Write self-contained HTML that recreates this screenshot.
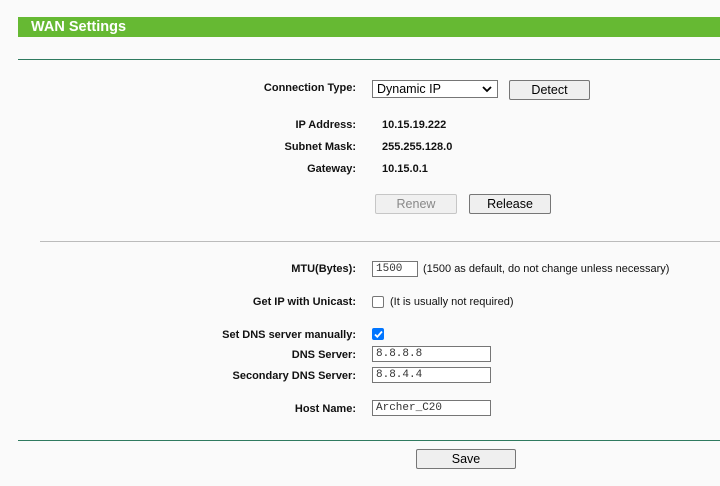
<!DOCTYPE html>
<html><head><style>
body{margin:0;width:720px;height:486px;background:#fafafa;font-family:"Liberation Sans",Arial,sans-serif;position:relative;overflow:hidden}
.a{position:absolute}
.l{position:absolute;right:364px;font-size:11px;font-weight:bold;color:#111;line-height:14px;margin-top:1px}
.v{position:absolute;left:382px;font-size:11px;font-weight:bold;color:#111;line-height:14px;margin-top:1px}
.t{position:absolute;font-size:11px;color:#111;line-height:14px;margin-top:1px}
.btn{position:absolute;height:18px;border:1px solid #767676;border-radius:2px;background:#efefef;font-size:12.5px;text-align:center;line-height:18px;color:#000;box-sizing:content-box}
.in{position:absolute;border:1px solid #767676;background:#fff;font-family:"Liberation Mono",monospace;font-size:11px;line-height:14px;padding-left:3px;color:#333;box-sizing:border-box;height:16px}
.cb{position:absolute;width:12px;height:12px;border:1px solid #767676;border-radius:2px;background:#fff;box-sizing:border-box}
</style></head><body>
<div class="a" style="left:18px;top:17px;width:702px;height:20px;background:#66b933"></div>
<div class="a" style="left:31px;top:18px;color:#fff;font-weight:bold;font-size:14.5px;line-height:18px">WAN Settings</div>
<div class="a" style="left:18px;top:59px;width:702px;height:1px;background:#2f7a5f"></div>

<div class="l" style="top:80px">Connection Type:</div>
<div class="a" style="left:372px;top:80px;width:126px;height:18px;border:1px solid #767676;background:#fff;box-sizing:border-box;font-size:12.5px;line-height:16px;padding-left:4px">Dynamic IP
<svg class="a" style="right:5px;top:5px" width="10" height="7" viewBox="0 0 10 7"><path d="M1 1l4 4 4-4" stroke="#000" stroke-width="1.8" fill="none"/></svg></div>
<div class="btn" style="left:509px;top:80px;width:79px">Detect</div>

<div class="l" style="top:117px">IP Address:</div><div class="v" style="top:117px">10.15.19.222</div>
<div class="l" style="top:139px">Subnet Mask:</div><div class="v" style="top:139px">255.255.128.0</div>
<div class="l" style="top:161px">Gateway:</div><div class="v" style="top:161px">10.15.0.1</div>

<div class="btn" style="left:375px;top:194px;width:80px;border-color:#c6c6c6;color:#888;background:#f0f0f0">Renew</div>
<div class="btn" style="left:469px;top:194px;width:80px">Release</div>

<div class="a" style="left:40px;top:241px;width:680px;height:1px;background:#bbb"></div>

<div class="l" style="top:261px">MTU(Bytes):</div>
<div class="in" style="left:372px;top:261px;width:46px">1500</div>
<div class="t" style="left:423px;top:261px">(1500 as default, do not change unless necessary)</div>

<div class="l" style="top:294px">Get IP with Unicast:</div>
<div class="cb" style="left:372px;top:296px"></div>
<div class="t" style="left:390px;top:294px">(It is usually not required)</div>

<div class="l" style="top:327px">Set DNS server manually:</div>
<div class="cb" style="left:372px;top:328px;background:#0075ff;border-color:#0075ff"><svg class="a" style="left:1px;top:1px" width="9" height="9" viewBox="0 0 9 9"><path d="M1 4.5l2.3 2.3L8 1.5" stroke="#fff" stroke-width="1.8" fill="none"/></svg></div>
<div class="l" style="top:347px">DNS Server:</div>
<div class="in" style="left:372px;top:346px;width:119px">8.8.8.8</div>
<div class="l" style="top:368px">Secondary DNS Server:</div>
<div class="in" style="left:372px;top:367px;width:119px">8.8.4.4</div>
<div class="l" style="top:401px">Host Name:</div>
<div class="in" style="left:372px;top:400px;width:119px">Archer_C20</div>

<div class="a" style="left:18px;top:440px;width:702px;height:1px;background:#2f7a5f"></div>
<div class="btn" style="left:416px;top:449px;width:98px">Save</div>
</body></html>
